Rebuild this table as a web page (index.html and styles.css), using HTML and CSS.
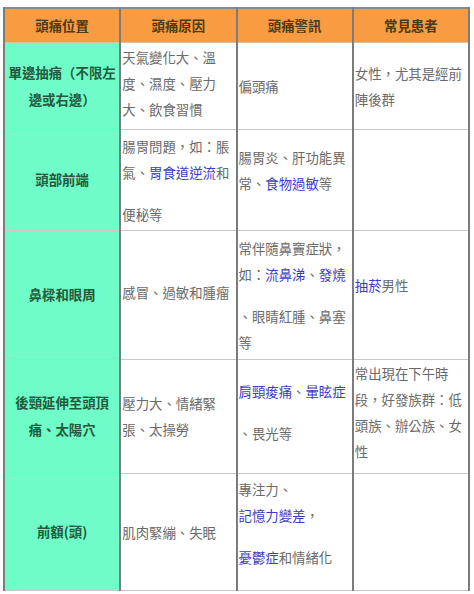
FILE: index.html
```html
<!DOCTYPE html>
<html lang="zh-Hant">
<head>
<meta charset="utf-8">
<title>頭痛位置</title>
<link rel="stylesheet" href="styles.css">
</head>
<body>
<table class="tbl">
  <colgroup><col class="c"><col class="c"><col class="c"><col class="c"></colgroup>
  <thead>
    <tr class="r0">
      <th>頭痛位置</th><th>頭痛原因</th><th>頭痛警訊</th><th>常見患者</th>
    </tr>
  </thead>
  <tbody>
    <tr class="r1">
      <td class="loc"><span class="l">單邊抽痛（不限左</span><span class="l">邊或右邊）</span></td>
      <td class="up0"><span class="l">天氣變化大、溫</span><span class="l">度、濕度、壓力</span><span class="l">大、飲食習慣</span></td>
      <td><span class="l">偏頭痛</span></td>
      <td><span class="l">女性，尤其是經前</span><span class="l">陣後群</span></td>
    </tr>
    <tr class="r2">
      <td class="loc"><span class="l">頭部前端</span></td>
      <td><span class="l">腸胃問題，如：脹</span><span class="l">氣、<a class="lk">胃食道逆流</a>和</span><span class="l gap">便秘等</span></td>
      <td class="up"><span class="l">腸胃炎、肝功能異</span><span class="l">常、<a class="lk">食物過敏</a>等</span></td>
      <td></td>
    </tr>
    <tr class="r3">
      <td class="loc"><span class="l">鼻樑和眼周</span></td>
      <td class="up1"><span class="l">感冒、過敏和腫瘤</span></td>
      <td><span class="l">常伴隨鼻竇症狀，</span><span class="l">如：<a class="lk">流鼻涕</a>、<a class="lk">發燒</a></span><span class="l gap">、眼睛紅腫、鼻塞</span><span class="l">等</span></td>
      <td class="up"><span class="l"><a class="lk">抽菸</a>男性</span></td>
    </tr>
    <tr class="r4">
      <td class="loc"><span class="l">後頸延伸至頭頂</span><span class="l">痛、太陽穴</span></td>
      <td><span class="l">壓力大、情緒緊</span><span class="l">張、太操勞</span></td>
      <td class="up2"><span class="l"><a class="lk">肩頸痠痛</a>、<a class="lk">暈眩症</a></span><span class="l gap">、畏光等</span></td>
      <td class="up2"><span class="l">常出現在下午時</span><span class="l">段，好發族群：低</span><span class="l">頭族、辦公族、女</span><span class="l">性</span></td>
    </tr>
    <tr class="r5">
      <td class="loc"><span class="l">前額(頭)</span></td>
      <td><span class="l">肌肉緊繃、失眠</span></td>
      <td class="up3"><span class="l">專注力、</span><span class="l"><a class="lk">記憶力變差</a>，</span><span class="l gap"><a class="lk">憂鬱症</a>和情緒化</span></td>
      <td></td>
    </tr>
  </tbody>
</table>
</body>
</html>
```

FILE: styles.css
```css
html, body {
  margin: 0;
  padding: 0;
  background: #ffffff;
}

body {
  font-family: "Noto Sans CJK TC", "Noto Sans", sans-serif;
  font-size: 13.4px;
  color: #6a6a6a;
}

.tbl {
  margin: 7px 0 0 3px;
  width: 467px;
  table-layout: fixed;
  border-collapse: collapse;
  border-top: 2px solid #8a8a8a;
  border-bottom: 1px solid #c8c8c8;
}

.tbl .c {
  width: 25%;
}

.tbl th,
.tbl td {
  padding: 0 1px;
  vertical-align: middle;
  text-align: left;
  border-left: 2px solid #7c7c7c;
  border-right: 2px solid #7c7c7c;
  border-top: 1px solid #c8c8c8;
  border-bottom: 1px solid #c8c8c8;
  overflow: hidden;
  white-space: nowrap;
}

.tbl th {
  background: #f99b40;
  color: #4d3a17;
  font-weight: bold;
  text-align: center;
  border-top: none;
  border-bottom: 1px solid #d9c39a;
}

.r0 { height: 34px; }
.r1 { height: 87px; }
.r2 { height: 101px; }
.r3 { height: 129px; }
.r4 { height: 114px; }
.r5 { height: 117px; }

.l {
  display: block;
  line-height: 26px;
}

.loc {
  background: #6ffcc8;
  color: #245a3c;
  font-weight: bold;
  text-align: center !important;
}

.loc .l {
  line-height: 27px;
}

.gap {
  margin-top: 16px;
}

.up0 { padding-bottom: 6px !important; }
.up { padding-bottom: 20px !important; }
.up1 { padding-bottom: 6px !important; }
.up2 { padding-bottom: 8px !important; }
.up3 { padding-bottom: 18px !important; }

.lk {
  color: #3b3bc4;
  text-decoration: none;
}
```
